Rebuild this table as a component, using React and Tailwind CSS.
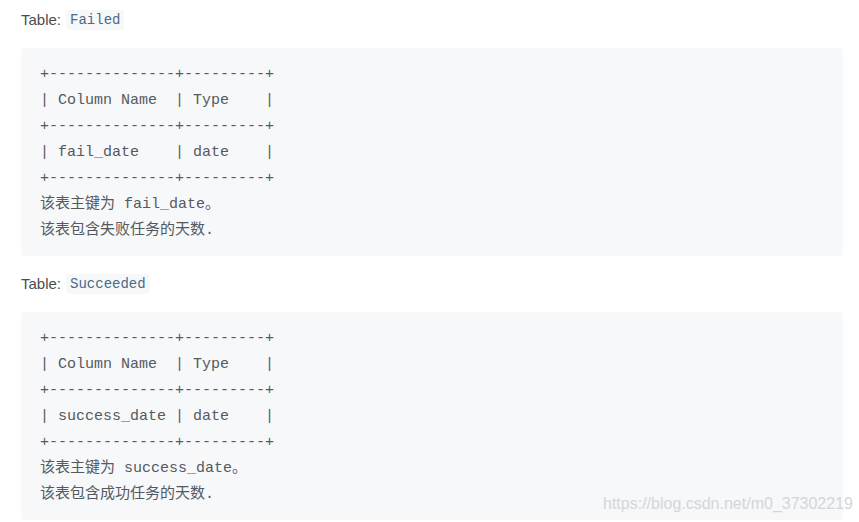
import React from "react";

const tables = [
    {
        name: "Failed",
        lines: [
            "+--------------+---------+",
            "| Column Name  | Type    |",
            "+--------------+---------+",
            "| fail_date    | date    |",
            "+--------------+---------+",
            "该表主键为 fail_date。",
            "该表包含失败任务的天数.",
        ],
    },
    {
        name: "Succeeded",
        lines: [
            "+--------------+---------+",
            "| Column Name  | Type    |",
            "+--------------+---------+",
            "| success_date | date    |",
            "+--------------+---------+",
            "该表主键为 success_date。",
            "该表包含成功任务的天数.",
        ],
    },
];

const TableBlock = ({ name, lines, first }) => (
    <div className={first ? "" : "mt-[18px]"}>
        <div className="flex items-center h-5 text-[15px] text-[#4d4d4d] font-['Liberation_Sans','Noto_Sans_CJK_SC',sans-serif]">
            <span>Table:</span>
            <code className="ml-[5px] h-5 flex items-center px-[4px] rounded-[3px] bg-[#f6f8fa] text-[#4a6a86] text-[14px] font-['Liberation_Mono',monospace]">
                {name}
            </code>
        </div>
        <pre className="mt-[18px] rounded-[4px] bg-[#f6f8fa] px-[19px] pt-[14px] pb-3 text-[15px] leading-[26px] text-[#555a60] whitespace-pre font-['Liberation_Mono','Noto_Sans_CJK_SC',monospace]">
            {lines.join("\n")}
        </pre>
    </div>
);

const App = () => {
    return (
        <div className="relative w-[859px] h-[522px] bg-white overflow-hidden pl-[21px] pr-[16px] pt-[10px]">
            {tables.map((t, i) => (
                <TableBlock key={t.name} name={t.name} lines={t.lines} first={i === 0} />
            ))}
            <div className="absolute left-[603px] top-[492px] text-[16px] text-[#d4d6d8] font-['Liberation_Sans',sans-serif] whitespace-nowrap">
                https://blog.csdn.net/m0_37302219
            </div>
        </div>
    );
};

export default App;
